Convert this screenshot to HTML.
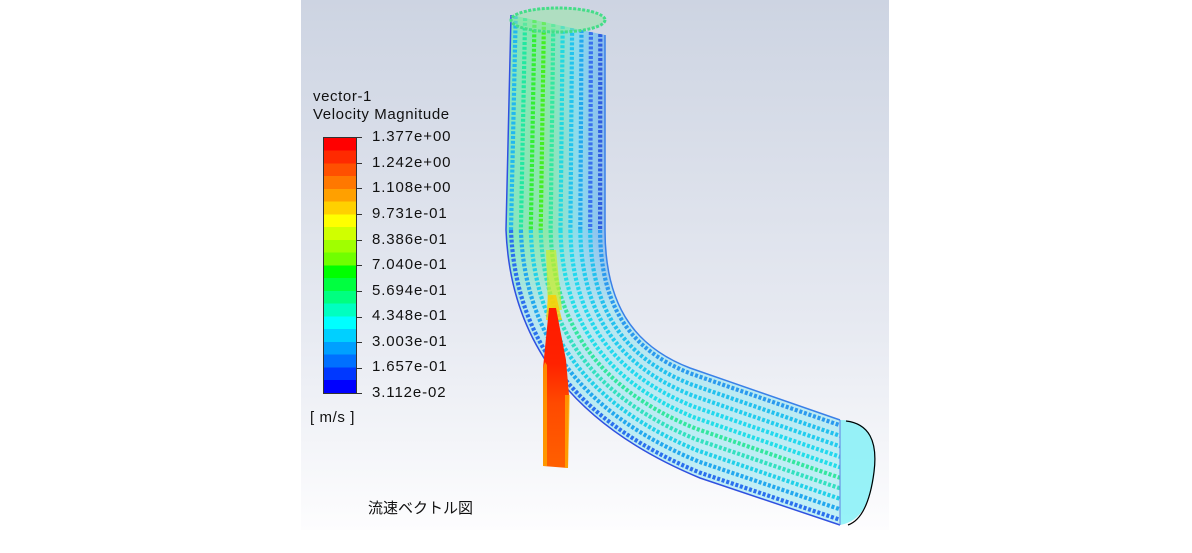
<!DOCTYPE html>
<html><head><meta charset="utf-8"><style>
html,body{margin:0;padding:0;background:#fff;}
body{width:1192px;height:553px;position:relative;overflow:hidden;font-family:"Liberation Sans","Noto Sans CJK JP",sans-serif;}
#panel{position:absolute;left:301px;top:0;width:588px;height:530px;background:linear-gradient(#cdd4e2,#e6e9f1 60%,#fdfdfe);}
.t{position:absolute;font-size:15px;letter-spacing:0.6px;color:#111;white-space:nowrap;}
.v{letter-spacing:0.9px;}
#bar{position:absolute;left:323px;top:137px;width:34px;height:257px;border:1px solid #333;box-sizing:border-box;
background:linear-gradient(to bottom,#ff0000 0,#ff0000 5%,#ff2a00 5%,#ff2a00 10%,#ff5000 10%,#ff5000 15%,#ff7800 15%,#ff7800 20%,#ffa000 20%,#ffa000 25%,#ffd000 25%,#ffd000 30%,#ffff00 30%,#ffff00 35%,#d0ff00 35%,#d0ff00 40%,#a0ff00 40%,#a0ff00 45%,#70ff00 45%,#70ff00 50%,#00ff00 50%,#00ff00 55%,#00ff40 55%,#00ff40 60%,#00ff80 60%,#00ff80 65%,#00ffc0 65%,#00ffc0 70%,#00ffff 70%,#00ffff 75%,#00d0ff 75%,#00d0ff 80%,#00a0ff 80%,#00a0ff 85%,#0070ff 85%,#0070ff 90%,#0038ff 90%,#0038ff 95%,#0000ff 95%);}
.tick{position:absolute;left:357px;width:5px;height:1px;background:#333;}
</style></head><body>
<div id="panel"></div>
<div class="t" style="left:313px;top:88px">vector-1</div>
<div class="t" style="left:313px;top:106px">Velocity Magnitude</div>
<div id="bar"></div>
<div class="tick" style="top:137px"></div><div class="tick" style="top:163px"></div><div class="tick" style="top:188px"></div><div class="tick" style="top:214px"></div><div class="tick" style="top:240px"></div><div class="tick" style="top:265px"></div><div class="tick" style="top:291px"></div><div class="tick" style="top:317px"></div><div class="tick" style="top:342px"></div><div class="tick" style="top:368px"></div><div class="tick" style="top:393px"></div>
<div class="t v" style="left:372px;top:128px">1.377e+00</div>
<div class="t v" style="left:372px;top:154px">1.242e+00</div>
<div class="t v" style="left:372px;top:179px">1.108e+00</div>
<div class="t v" style="left:372px;top:205px">9.731e-01</div>
<div class="t v" style="left:372px;top:231px">8.386e-01</div>
<div class="t v" style="left:372px;top:256px">7.040e-01</div>
<div class="t v" style="left:372px;top:282px">5.694e-01</div>
<div class="t v" style="left:372px;top:307px">4.348e-01</div>
<div class="t v" style="left:372px;top:333px">3.003e-01</div>
<div class="t v" style="left:372px;top:358px">1.657e-01</div>
<div class="t v" style="left:372px;top:384px">3.112e-02</div>
<div class="t" style="left:310px;top:409px">[ m/s ]</div>
<div class="t" style="left:368px;top:497px;font-size:15px;letter-spacing:0">流速ベクトル図</div>
<svg width="1192" height="553" style="position:absolute;left:0;top:0">
<defs>
<linearGradient id="nz" x1="0" y1="0" x2="0" y2="1"><stop offset="0" stop-color="#ff1a00"/><stop offset="0.35" stop-color="#ff2200"/><stop offset="0.6" stop-color="#ff4a00"/><stop offset="1" stop-color="#ff6000"/></linearGradient>
<linearGradient id="vg" x1="0" y1="0" x2="1" y2="0"><stop offset="0" stop-color="#60e8b0"/><stop offset="0.4" stop-color="#70ee70"/><stop offset="0.7" stop-color="#70d8ee"/><stop offset="1" stop-color="#7090ee"/></linearGradient>
<linearGradient id="fade" x1="0" y1="0" x2="0" y2="1"><stop offset="0" stop-color="#fff"/><stop offset="0.75" stop-color="#fff"/><stop offset="1" stop-color="#000"/></linearGradient>
<mask id="fm" maskUnits="userSpaceOnUse" x="500" y="10" width="110" height="300"><rect x="500" y="10" width="110" height="300" fill="url(#fade)"/></mask>
<clipPath id="pc"><path d="M511,15 L506,230 C510,330 560,420 700,478 L840,525 L840,420 L690,368 C630,345 605,300 605,230 L605,35 Z"/></clipPath>
</defs>
<path d="M511,15 L506,230 C510,330 560,420 700,478 L840,525 L840,420 L690,368 C630,345 605,300 605,230 L605,35 Z" fill="#88e4f0" fill-opacity="0.5"/>
<rect x="500" y="10" width="110" height="300" fill="url(#vg)" opacity="0.55" clip-path="url(#pc)" mask="url(#fm)"/>
<g fill="none" stroke-width="4.2" stroke-dasharray="3 1.8" clip-path="url(#pc)">
<path d="M515.7,16 L511,230" stroke="#22b8ee"/>
<path d="M525.1,18 L520.9,230" stroke="#22e8a0"/>
<path d="M534.5,20 L530.8,230" stroke="#33ee33"/>
<path d="M543.9,22 L540.7,230" stroke="#44ee22"/>
<path d="M553.3,24 L550.6,230" stroke="#33e8a0"/>
<path d="M562.7,26 L560.5,230" stroke="#22d8e0"/>
<path d="M572.1,28 L570.4,230" stroke="#22c4ee"/>
<path d="M581.5,30 L580.3,230" stroke="#22a8ee"/>
<path d="M590.9,32 L590.2,230" stroke="#3a70ee"/>
<path d="M600.3,34 L600.1,230" stroke="#2f5ee0"/>
<path d="M511,230 C514.8,328.5 563.5,416.3 699.5,472.5 L840,519.8" stroke="#2a70ee"/>
<path d="M520.9,230 C524.3,325.5 570.5,408.8 698.5,461.5 L840,509.3" stroke="#22a8ee"/>
<path d="M530.8,230 C533.8,322.5 577.5,401.3 697.5,450.5 L840,498.8" stroke="#22d0e8"/>
<path d="M540.7,230 C543.3,319.5 584.5,393.8 696.5,439.5 L840,488.3" stroke="#33e0c0"/>
<path d="M550.6,230 C552.8,316.5 591.5,386.3 695.5,428.5 L840,477.8" stroke="#33e6a0"/>
<path d="M560.5,230 C562.3,313.5 598.5,378.8 694.5,417.5 L840,467.3" stroke="#22dde8"/>
<path d="M570.4,230 C571.8,310.5 605.5,371.3 693.5,406.5 L840,456.8" stroke="#22d8ee"/>
<path d="M580.3,230 C581.3,307.5 612.5,363.8 692.5,395.5 L840,446.3" stroke="#22ccee"/>
<path d="M590.2,230 C590.8,304.5 619.5,356.3 691.5,384.5 L840,435.8" stroke="#22c0ee"/>
<path d="M600.1,230 C600.3,301.5 626.5,348.8 690.5,373.5 L840,425.3" stroke="#2a9aee"/>
</g>
<path d="M511,15 L506,230 C510,330 560,420 700,478 L840,525" fill="none" stroke="#3050e0" stroke-width="1.5"/>
<path d="M605,35 L605,230 C605,300 630,345 690,368 L840,420" fill="none" stroke="#3a80e8" stroke-width="1.5"/>
<ellipse cx="558" cy="20" rx="47" ry="12" fill="#90e8a0" fill-opacity="0.5" stroke="#44dd88" stroke-width="3" stroke-dasharray="3 1.5"/>
<path d="M840,420 Q880,420 875,470 Q870,520 840,525 Z" fill="#7ef0f6" fill-opacity="0.8"/>
<line x1="840" y1="420" x2="840" y2="525" stroke="#6080e0" stroke-width="1"/>
<path d="M846,421 Q880,425 874,472 Q868,518 848,525" fill="none" stroke="#000" stroke-width="1.2"/>
<path d="M546,250 L556,250 L562,310 L548,310 Z" fill="#ccee22" opacity="0.7"/>
<path d="M548,295 L556,295 L562,320 L546,320 Z" fill="#ffcc00" opacity="0.8"/>
<path d="M549,308 L556,308 L566,360 L569,395 L568,468 L543,466 L543,368 Z" fill="url(#nz)"/>
<path d="M545,362 L543,368 L543,466 L547,466 L547,365 Z" fill="#ffb000" opacity="0.7"/>
<path d="M565,395 L570,395 L568,468 L565,468 Z" fill="#ffc400" opacity="0.6"/>
</svg>
</body></html>
